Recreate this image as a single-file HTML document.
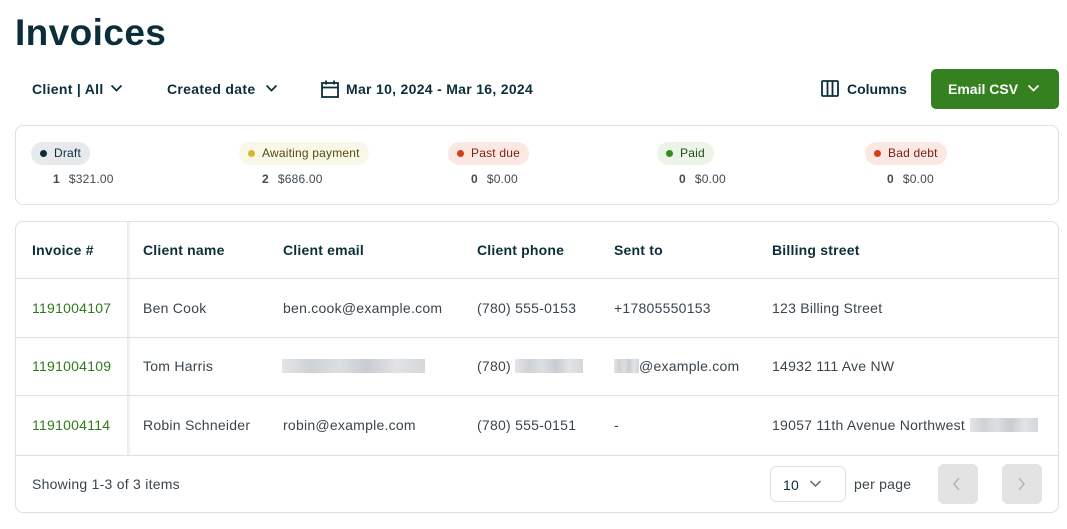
<!DOCTYPE html>
<html><head><style>
*{margin:0;padding:0;box-sizing:border-box}
body{width:1067px;height:529px;background:#fff;font-family:"Liberation Sans",Arial,sans-serif;color:#0b2e3a;position:relative;overflow:hidden}
.a{position:absolute;white-space:nowrap}
.tb{font-size:14px;font-weight:bold;top:80px;line-height:18px;letter-spacing:0.3px}
.card{position:absolute;left:15px;width:1044px;border:1px solid #dde1e4;border-radius:8px}
.badge{position:absolute;top:142px;height:23px;border-radius:12px;font-size:12px;line-height:23px;padding:0 9px 0 23px;letter-spacing:0.2px}
.badge i{position:absolute;left:9px;top:8px;width:7px;height:7px;border-radius:50%}
.cnt{position:absolute;top:171px;font-size:12px;color:#3f4a52;line-height:16px;letter-spacing:0.2px}
.cnt b{margin-right:9px}
.th{font-size:14px;font-weight:bold;top:242px;letter-spacing:0.2px}
.td{font-size:14px;color:#3a454d;letter-spacing:0.25px}
.lnk{color:#2e7d1c}
.hl{position:absolute;left:16px;width:1042px;height:1px;background:#dde1e4}
.blur{position:absolute;height:14px;background:linear-gradient(90deg,#e3e5e7,#cfd2d5,#dcdfe1,#c9ccd0,#e1e3e5,#d4d7da)}
</style></head><body>
<div class="a" style="left:15px;top:12px;font-size:37px;font-weight:bold;letter-spacing:0.4px">Invoices</div>

<div class="a tb" style="left:32px">Client | All</div>
<svg class="a" style="left:110px;top:83px" width="13" height="10" viewBox="0 0 13 10"><path d="M1.5 2.5l5 5 5-5" fill="none" stroke="#0b2e3a" stroke-width="1.7"/></svg>
<div class="a tb" style="left:167px">Created date</div>
<svg class="a" style="left:265px;top:83px" width="13" height="10" viewBox="0 0 13 10"><path d="M1.5 2.5l5 5 5-5" fill="none" stroke="#0b2e3a" stroke-width="1.7"/></svg>
<svg class="a" style="left:320px;top:79px" width="20" height="20" viewBox="0 0 20 20"><rect x="2" y="4" width="16" height="14" fill="none" stroke="#0b2e3a" stroke-width="1.8"/><path d="M2 8.5h16M6 1.5v4M14 1.5v4" stroke="#0b2e3a" stroke-width="1.8"/></svg>
<div class="a tb" style="left:346px">Mar 10, 2024 - Mar 16, 2024</div>
<svg class="a" style="left:821px;top:80px" width="19" height="17" viewBox="0 0 19 17"><rect x="1" y="1" width="16" height="15" rx="1" fill="none" stroke="#0b2e3a" stroke-width="1.8"/><path d="M6.5 1v15M11.5 1v15" stroke="#0b2e3a" stroke-width="1.8"/></svg>
<div class="a tb" style="left:847px;letter-spacing:0">Columns</div>
<div class="a" style="left:931px;top:69px;width:128px;height:40px;background:#35801f;border-radius:5px"></div>
<div class="a tb" style="left:948px;color:#fff;letter-spacing:0">Email CSV</div>
<svg class="a" style="left:1027px;top:83px" width="13" height="10" viewBox="0 0 13 10"><path d="M1.5 2.5l5 5 5-5" fill="none" stroke="#fff" stroke-width="1.7"/></svg>

<div class="card" style="top:125px;height:80px"></div>
<div class="badge" style="left:31px;background:#e6eaed;color:#0b2e3a"><i style="background:#0b2e3a"></i>Draft</div>
<div class="cnt" style="left:53px"><b>1</b>$321.00</div>
<div class="badge" style="left:239px;background:#f9f7e7;color:#574a0e"><i style="background:#d4b92c"></i>Awaiting payment</div>
<div class="cnt" style="left:262px"><b>2</b>$686.00</div>
<div class="badge" style="left:448px;background:#fbe8e3;color:#7a2014"><i style="background:#d23f1a"></i>Past due</div>
<div class="cnt" style="left:471px"><b>0</b>$0.00</div>
<div class="badge" style="left:657px;background:#ecf4e8;color:#1f4a14"><i style="background:#358a1e"></i>Paid</div>
<div class="cnt" style="left:679px"><b>0</b>$0.00</div>
<div class="badge" style="left:865px;background:#fbe8e3;color:#7a2014"><i style="background:#d23f1a"></i>Bad debt</div>
<div class="cnt" style="left:887px"><b>0</b>$0.00</div>

<div class="card" style="top:221px;height:292px"></div>
<div class="a" style="left:127px;top:222px;width:4px;height:233px;background:linear-gradient(90deg,#e6e8ea,#fff)"></div>
<div class="hl" style="top:278px"></div>
<div class="hl" style="top:337px"></div>
<div class="hl" style="top:395px"></div>
<div class="hl" style="top:455px"></div>

<div class="a th" style="left:32px">Invoice #</div>
<div class="a th" style="left:143px">Client name</div>
<div class="a th" style="left:283px">Client email</div>
<div class="a th" style="left:477px">Client phone</div>
<div class="a th" style="left:614px">Sent to</div>
<div class="a th" style="left:772px">Billing street</div>

<div class="a td lnk" style="left:32px;top:300px">1191004107</div>
<div class="a td" style="left:143px;top:300px">Ben Cook</div>
<div class="a td" style="left:283px;top:300px">ben.cook@example.com</div>
<div class="a td" style="left:477px;top:300px">(780) 555-0153</div>
<div class="a td" style="left:614px;top:300px">+17805550153</div>
<div class="a td" style="left:772px;top:300px">123 Billing Street</div>

<div class="a td lnk" style="left:32px;top:358px">1191004109</div>
<div class="a td" style="left:143px;top:358px">Tom Harris</div>
<div class="blur" style="left:282px;top:359px;width:143px"></div>
<div class="a td" style="left:477px;top:358px">(780)</div>
<div class="blur" style="left:515px;top:359px;width:68px"></div>
<div class="blur" style="left:614px;top:359px;width:25px"></div>
<div class="a td" style="left:639px;top:358px">@example.com</div>
<div class="a td" style="left:772px;top:358px">14932 111 Ave NW</div>

<div class="a td lnk" style="left:32px;top:417px">1191004114</div>
<div class="a td" style="left:143px;top:417px">Robin Schneider</div>
<div class="a td" style="left:283px;top:417px">robin@example.com</div>
<div class="a td" style="left:477px;top:417px">(780) 555-0151</div>
<div class="a td" style="left:614px;top:417px">-</div>
<div class="a td" style="left:772px;top:417px">19057 11th Avenue Northwest</div>
<div class="blur" style="left:970px;top:418px;width:68px"></div>

<div class="a td" style="left:32px;top:476px">Showing 1-3 of 3 items</div>
<div class="a" style="left:770px;top:466px;width:76px;height:36px;border:1px solid #dde1e4;border-radius:6px"></div>
<div class="a td" style="left:783px;top:477px;color:#0b2e3a">10</div>
<svg class="a" style="left:809px;top:479px" width="13" height="9" viewBox="0 0 13 9"><path d="M1.5 2l5 5 5-5" fill="none" stroke="#5a6770" stroke-width="1.5"/></svg>
<div class="a td" style="left:854px;top:476px">per page</div>
<div class="a" style="left:938px;top:464px;width:40px;height:40px;background:#e3e3e3;border-radius:6px"></div>
<svg class="a" style="left:952px;top:476px" width="10" height="16" viewBox="0 0 10 16"><path d="M7 2L2 8l5 6" fill="none" stroke="#b5b5b5" stroke-width="1.5"/></svg>
<div class="a" style="left:1002px;top:464px;width:40px;height:40px;background:#e3e3e3;border-radius:6px"></div>
<svg class="a" style="left:1016px;top:476px" width="10" height="16" viewBox="0 0 10 16"><path d="M3 2l5 6-5 6" fill="none" stroke="#b5b5b5" stroke-width="1.5"/></svg>
</body></html>
